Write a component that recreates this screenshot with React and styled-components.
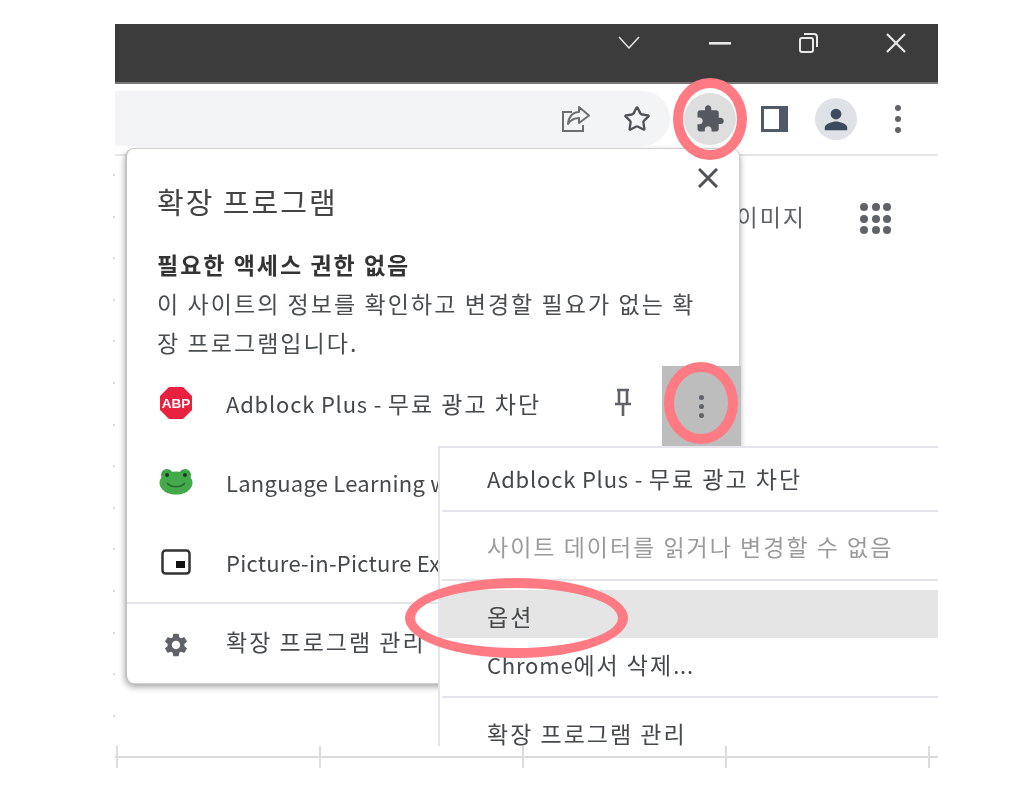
import styled, { createGlobalStyle } from "styled-components";
import { Star } from "lucide-react";

const GlobalStyle = createGlobalStyle`
  html, body {
    margin: 0;
    background: #fff;
    overflow: hidden;
  }
  body {
    font-family: "Noto Sans CJK KR", "Noto Sans", sans-serif;
    color: #3c4043;
  }
`;

const Page = styled.div`
  width: 823px;
  margin: 24px 0 0 115px;
  display: flex;
  flex-direction: column;
  filter: blur(0.4px);
`;

const TitleBar = styled.div`
  height: 60px;
  box-sizing: border-box;
  background: #3c3c3c;
  display: flex;
  align-items: center;
  justify-content: flex-end;
  padding: 0 32px 20px 0;
  gap: 68px;
  color: #e8e8e8;
  border-bottom: 2px solid #777;
  svg {
    display: block;
  }
`;

const Toolbar = styled.div`
  height: 72px;
  box-sizing: border-box;
  display: flex;
  align-items: center;
  border-bottom: 2px solid #e6e6e6;
`;

const Omnibox = styled.div`
  width: 555px;
  height: 55px;
  margin-top: -1px;
  background: #f3f4f6;
  border-radius: 0 28px 28px 0;
  display: flex;
  align-items: center;
  justify-content: flex-end;
  gap: 32px;
  padding-right: 19px;
  box-sizing: border-box;
  color: #5f6368;
`;

const ToolbarIcons = styled.div`
  flex: 1;
  display: flex;
  align-items: center;
  color: #5f6368;
`;

const ExtensionButton = styled.div`
  width: 52px;
  height: 52px;
  margin-left: 14px;
  background: #dedede;
  border-radius: 50%;
  display: flex;
  align-items: center;
  justify-content: center;
`;

const PanelIcon = styled.div`
  width: 15px;
  height: 20px;
  margin-left: 25px;
  border: 3px solid #4f5a66;
  border-right-width: 9px;
`;

const Avatar = styled.div`
  width: 42px;
  height: 42px;
  margin-left: 27px;
  background: #dee1e6;
  border-radius: 50%;
  display: flex;
  align-items: center;
  justify-content: center;
  color: #3c4a5e;
`;

const Kebab = styled.div`
  display: flex;
  flex-direction: column;
  gap: ${(p) => p.$gap}px;
  i {
    display: block;
    width: ${(p) => p.$size}px;
    height: ${(p) => p.$size}px;
    border-radius: 50%;
    background: #5f6368;
  }
`;

const ToolbarKebab = styled(Kebab)`
  margin-left: 38px;
`;

const Content = styled.div`
  position: relative;
  height: 590px;
  display: flex;
  justify-content: flex-end;
  align-items: flex-start;
  padding: 47px 47px 0 0;
  box-sizing: border-box;
  gap: 54px;
`;

const DotRail = styled.div`
  position: absolute;
  left: -2px;
  top: 18px;
  width: 2px;
  height: 570px;
  background: repeating-linear-gradient(#ddd 0 2px, transparent 2px 41.6px);
`;

const PageLink = styled.div`
  margin-top: -4px;
  font-size: 23px;
  line-height: 34px;
  letter-spacing: 2px;
  color: #5f6368;
`;

const AppsGrid = styled.div`
  display: grid;
  grid-template-columns: repeat(3, 8px);
  gap: 3.5px;
  i {
    width: 8px;
    height: 8px;
    border-radius: 50%;
    background: #5f6368;
  }
`;

const Popup = styled.div`
  position: absolute;
  left: 10px;
  top: -8px;
  width: 615px;
  height: 536px;
  box-sizing: border-box;
  background: #fff;
  border-radius: 9px;
  border: 1px solid #d0d0d0;
  border-left: 2px solid #c4c4c4;
  box-shadow: 0 3px 6px rgba(0, 0, 0, 0.35);
  display: flex;
  flex-direction: column;
`;

const PopupHeader = styled.div`
  padding: 31px 30px 0 30px;
  display: flex;
  flex-direction: column;
`;

const PopupTitle = styled.h1`
  margin: 0;
  font-size: 29px;
  line-height: 42px;
  font-weight: 400;
  letter-spacing: 2px;
  color: #444;
`;

const Heading = styled.div`
  margin-top: 22px;
  font-size: 23px;
  line-height: 40px;
  font-weight: 700;
  letter-spacing: 2px;
  color: #333;
`;

const Description = styled.p`
  margin: 0;
  font-size: 23px;
  line-height: 39px;
  letter-spacing: 2.07px;
  white-space: nowrap;
  color: #4a4d50;
`;

const CloseButton = styled.div`
  position: absolute;
  top: 19px;
  right: 21px;
  color: #4f5358;
  svg {
    display: block;
  }
`;

const ExtensionList = styled.div`
  margin-top: 1px;
  display: flex;
  flex-direction: column;
`;

const ExtensionRow = styled.div`
  height: 79.5px;
  display: flex;
  align-items: center;
  padding-left: 31px;
  position: relative;
  white-space: nowrap;
`;

const RowIcon = styled.div`
  width: 36px;
  flex: none;
  display: flex;
  justify-content: center;
  svg {
    display: block;
  }
`;

const GearSlot = styled(RowIcon)`
  padding-top: 8px;
`;

const RowLabel = styled.div`
  margin-left: 32px;
  font-size: 23px;
  letter-spacing: 2px;
  color: #46494c;
`;

const Latin = styled.span`
  font-size: 22px;
  letter-spacing: ${(p) => p.$spacing || 0.8}px;
`;

const PinIcon = styled.div`
  margin-left: 72px;
  color: #5f6368;
  svg {
    display: block;
  }
`;

const RowMenuButton = styled.div`
  position: absolute;
  right: -2px;
  top: 3px;
  bottom: -4px;
  width: 79px;
  background: #bdbdbd;
  display: flex;
  align-items: center;
  justify-content: center;
`;

const Footer = styled.div`
  border-top: 2px solid #e4e4ea;
  height: 76px;
  box-sizing: border-box;
  display: flex;
  align-items: center;
  padding-left: 31px;
  white-space: nowrap;
`;

const ContextMenu = styled.div`
  position: absolute;
  left: 323px;
  right: 0;
  top: 290px;
  height: 300px;
  background: #fff;
  overflow: hidden;
  border-top: 2px solid #e4e4ea;
  border-left: 2px solid #e4e4ea;
  box-sizing: border-box;
  display: flex;
  flex-direction: column;
  white-space: nowrap;
`;

const MenuItem = styled.div`
  height: ${(p) => p.$height}px;
  flex: none;
  box-sizing: border-box;
  display: flex;
  align-items: center;
  white-space: pre;
  padding: ${(p) => (p.$active ? "4px" : "0")} 0 0 47px;
  font-size: 23px;
  letter-spacing: 2px;
  color: ${(p) => (p.$disabled ? "#9b9b9b" : "#46494c")};
  background: ${(p) => (p.$active ? "#e5e5e5" : "transparent")};
`;

const MenuDivider = styled.div`
  height: 2px;
  flex: none;
  margin-left: 2px;
  background: #e4e4ea;
`;

const MenuGap = styled.div`
  height: ${(p) => p.$height}px;
  flex: none;
`;

const Ruler = styled.div`
  height: 22px;
  padding-left: 1px;
  display: flex;
  background: linear-gradient(#dcdcdc, #dcdcdc) center / 100% 2px no-repeat;
  div {
    width: 203px;
    flex: none;
    box-sizing: border-box;
    border-left: 2px solid #dcdcdc;
  }
  div:last-child {
    width: 9px;
  }
`;

const Ring = styled.div`
  position: absolute;
  left: ${(p) => p.$x}px;
  top: ${(p) => p.$y}px;
  width: ${(p) => p.$w}px;
  height: ${(p) => p.$h}px;
  box-sizing: border-box;
  border: 10px solid #ff7a82;
  border-radius: 50%;
  pointer-events: none;
`;

const dots = (n) => Array.from({ length: n }, (_, i) => <i key={i} />);

const ShareIcon = () => (
  <svg width="30" height="28" viewBox="0 0 30 28" fill="none" stroke="#6b6f73" strokeWidth="2">
    <path d="M11 7H2v19h20v-6" />
    <path d="M18 2l10 8.5L18 18v-5c-5 0-8 1.500-11 6 .5-7 4.500-12 11-12z" strokeLinejoin="round" />
  </svg>
);

const PuzzleIcon = () => (
  <svg width="30" height="30" viewBox="0 0 24 24" fill="#54585f">
    <path d="M20.5 11H19V7c0-1.100-.9-2-2-2h-4V3.500C13 2.120 11.880 1 10.500 1S8 2.120 8 3.500V5H4c-1.100 0-1.990.9-1.990 2v3.800H3.500c1.490 0 2.700 1.210 2.700 2.700s-1.210 2.700-2.700 2.700H2V20c0 1.100.9 2 2 2h3.800v-1.500c0-1.490 1.210-2.700 2.700-2.700 1.490 0 2.700 1.210 2.700 2.700V22H17c1.100 0 2-.9 2-2v-4h1.500c1.380 0 2.500-1.120 2.500-2.500S21.880 11 20.500 11z" />
  </svg>
);

const PersonIcon = () => (
  <svg width="30" height="30" viewBox="0 0 24 24" fill="currentColor">
    <circle cx="12" cy="8" r="4.300" />
    <path d="M3 21v-2c0-3.200 6-5 9-5s9 1.800 9 5v2z" />
  </svg>
);

const CloseIcon = ({ size, width }) => (
  <svg width={size} height={size} viewBox="0 0 20 20" stroke="currentColor" strokeWidth={width} fill="none">
    <path d="M1 1l18 18M19 1L1 19" />
  </svg>
);

const AbpIcon = () => (
  <svg width="34" height="34" viewBox="0 0 34 34">
    <polygon points="10,1 24,1 33,10 33,24 24,33 10,33 1,24 1,10" fill="#e8213f" />
    <text x="17" y="22" textAnchor="middle" fontSize="13.500" fontWeight="700" fill="#fff" fontFamily="Liberation Sans">
      ABP
    </text>
  </svg>
);

const FrogIcon = () => (
  <svg width="34" height="26" viewBox="0 0 34 26">
    <circle cx="8" cy="6" r="6" fill="#3da344" />
    <circle cx="26" cy="6" r="6" fill="#3da344" />
    <ellipse cx="17" cy="14" rx="16.500" ry="11.500" fill="#43a94a" />
    <circle cx="8" cy="6" r="2" fill="#1d3b20" />
    <circle cx="26" cy="6" r="2" fill="#1d3b20" />
    <path d="M8 14c4 5 14 5 18 0" stroke="#256b2b" strokeWidth="1.600" fill="none" />
  </svg>
);

const PipIcon = () => (
  <svg width="30" height="26" viewBox="0 0 30 26">
    <rect x="1.500" y="1.500" width="27" height="23" rx="3" fill="none" stroke="#333" strokeWidth="2.500" />
    <rect x="15" y="12" width="9" height="7" fill="#111" />
  </svg>
);

const GearIcon = () => (
  <svg width="28" height="28" viewBox="0 0 24 24" fill="#5f6368">
    <path d="M19.140 12.940c.04-.3.060-.61.060-.94 0-.32-.02-.64-.07-.94l2.030-1.580a.49.490 0 0 0 .12-.61l-1.920-3.320a.488.488 0 0 0-.59-.22l-2.390.96c-.5-.38-1.030-.7-1.620-.94l-.36-2.540a.484.484 0 0 0-.48-.41h-3.840c-.24 0-.43.170-.47.410l-.36 2.540c-.59.240-1.130.570-1.620.94l-2.390-.96c-.22-.08-.47 0-.59.220L2.740 8.870c-.12.210-.08.470.12.610l2.030 1.580c-.05.300-.09.630-.09.940s.02.640.07.940l-2.030 1.580a.49.490 0 0 0-.12.610l1.920 3.320c.12.220.37.290.59.220l2.390-.96c.5.380 1.030.7 1.620.94l.36 2.540c.05.240.24.410.48.410h3.840c.24 0 .44-.17.47-.41l.36-2.540c.59-.24 1.130-.56 1.620-.94l2.390.96c.22.080.47 0 .59-.22l1.920-3.320c.12-.22.070-.47-.12-.61l-2.010-1.580zM12 15.600c-1.980 0-3.600-1.620-3.600-3.600s1.620-3.600 3.600-3.600 3.600 1.620 3.600 3.600-1.620 3.600-3.600 3.600z" />
  </svg>
);

const PushPinIcon = () => (
  <svg width="20" height="30" viewBox="0 0 20 30" fill="none" stroke="currentColor" strokeWidth="2.600">
    <path d="M4 2h12M6 2v13M14 2v13M2 16h16M10 16v12" />
  </svg>
);

export default function App() {
  return (
    <>
      <GlobalStyle />
      <Page>
        <TitleBar>
          <svg width="24" height="14" viewBox="0 0 24 14" fill="none" stroke="currentColor" strokeWidth="1.500">
            <path d="M2 1l10 11L22 1" />
          </svg>
          <svg width="22" height="3" viewBox="0 0 22 3" fill="currentColor">
            <rect width="22" height="2.600" />
          </svg>
          <svg width="19" height="20" viewBox="0 0 19 20" fill="none" stroke="currentColor" strokeWidth="2">
            <rect x="1" y="5" width="13" height="14" rx="2" />
            <path d="M5 1h10a3 3 0 0 1 3 3v10" />
          </svg>
          <CloseIcon size={20} width={2.2} />
        </TitleBar>
        <Toolbar>
          <Omnibox>
            <ShareIcon />
            <Star size={28} strokeWidth={2} color="#4f5358" />
          </Omnibox>
          <ToolbarIcons>
            <ExtensionButton>
              <PuzzleIcon />
            </ExtensionButton>
            <PanelIcon />
            <Avatar>
              <PersonIcon />
            </Avatar>
            <ToolbarKebab $size={6} $gap={5}>
              {dots(3)}
            </ToolbarKebab>
          </ToolbarIcons>
        </Toolbar>
        <Content>
          <DotRail />
          <PageLink>이미지</PageLink>
          <AppsGrid>{dots(9)}</AppsGrid>
          <Popup>
            <CloseButton>
              <CloseIcon size={20} width={3} />
            </CloseButton>
            <PopupHeader>
              <PopupTitle>확장 프로그램</PopupTitle>
              <Heading>필요한 액세스 권한 없음</Heading>
              <Description>
                이 사이트의 정보를 확인하고 변경할 필요가 없는 확
                <br />장 프로그램입니다.
              </Description>
            </PopupHeader>
            <ExtensionList>
              <ExtensionRow>
                <RowIcon>
                  <AbpIcon />
                </RowIcon>
                <RowLabel>
                  <Latin>Adblock Plus - </Latin>무료 광고 차단
                </RowLabel>
                <PinIcon>
                  <PushPinIcon />
                </PinIcon>
                <RowMenuButton>
                  <Kebab $size={5} $gap={4}>
                    {dots(3)}
                  </Kebab>
                </RowMenuButton>
              </ExtensionRow>
              <ExtensionRow>
                <RowIcon>
                  <FrogIcon />
                </RowIcon>
                <RowLabel>
                  <Latin $spacing={0.25}>Language Learning with Netflix</Latin>
                </RowLabel>
              </ExtensionRow>
              <ExtensionRow>
                <RowIcon>
                  <PipIcon />
                </RowIcon>
                <RowLabel>
                  <Latin $spacing={0.25}>Picture-in-Picture Extension</Latin>
                </RowLabel>
              </ExtensionRow>
            </ExtensionList>
            <Footer>
              <GearSlot>
                <GearIcon />
              </GearSlot>
              <RowLabel>확장 프로그램 관리</RowLabel>
            </Footer>
          </Popup>
          <ContextMenu>
            <MenuItem $height={60}>
              <span>
                <Latin>Adblock Plus - </Latin>무료 광고 차단
              </span>
            </MenuItem>
            <MenuGap $height={2} />
            <MenuDivider />
            <MenuItem $height={67} $disabled>
              사이트 데이터를 읽거나 변경할 수 없음
            </MenuItem>
            <MenuDivider />
            <MenuGap $height={9} />
            <MenuItem $height={48} $active>
              옵션
            </MenuItem>
            <MenuItem $height={52}>
              <span>
                <Latin>Chrome</Latin>에서 삭제<Latin>...</Latin>
              </span>
            </MenuItem>
            <MenuGap $height={6} />
            <MenuDivider />
            <MenuItem $height={70}>확장 프로그램 관리</MenuItem>
          </ContextMenu>
          <Ring $x={558} $y={-78} $w={74} $h={82} />
          <Ring $x={549} $y={206} $w={74} $h={82} />
          <Ring $x={290} $y={422} $w={223} $h={80} />
        </Content>
        <Ruler>
          {dots(5).map((_, i) => (
            <div key={i} />
          ))}
        </Ruler>
      </Page>
    </>
  );
}
